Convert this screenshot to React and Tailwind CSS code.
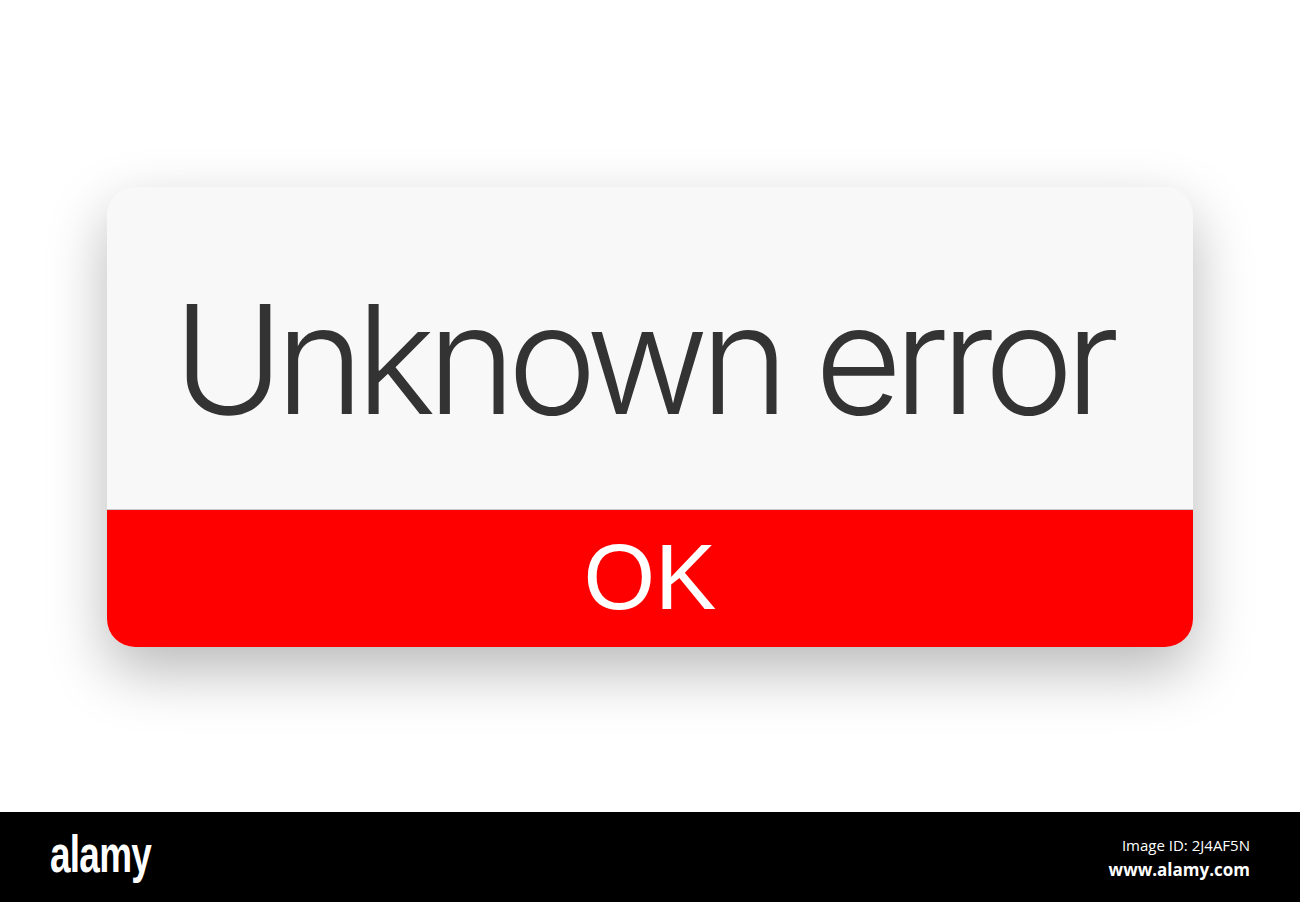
import React from 'react';

const ErrorDialog = () => {
  return (
    <div className="w-[1086px] rounded-[28px] overflow-hidden bg-[#f8f8f8] shadow-[0_24px_60px_rgba(0,0,0,0.28)]">
      <div className="h-[323px] flex items-center justify-center border-b border-[#c9c9c9] pt-[22px]">
        <span
          className="text-[#333333] text-[151px] leading-none font-light tracking-[-8.5px] pr-[16px]"
          style={{ fontFamily: 'Inter, "Liberation Sans", sans-serif' }}
        >
          Unknown error
        </span>
      </div>
      <button className="w-full h-[137px] bg-[#ff0000] flex items-center justify-center pb-[4px]">
        <span
          className="text-white text-[92px] leading-none"
          style={{ fontFamily: '"Liberation Sans", Arial, sans-serif' }}
        >
          OK
        </span>
      </button>
    </div>
  );
};

export default function App() {
  return (
    <div className="w-[1300px] h-[902px] flex flex-col bg-white overflow-hidden">
      <div className="h-[812px] flex items-start justify-center pt-[187px]">
        <ErrorDialog />
      </div>
      <footer className="h-[90px] bg-black flex items-center justify-between pl-[50px] pr-[50px]">
        <span
          className="inline-block origin-left scale-x-[0.71] text-white text-[52px] font-bold leading-none tracking-[-1px] pb-[6px]"
          style={{ fontFamily: '"Liberation Sans", sans-serif' }}
        >
          alamy
        </span>
        <div
          className="flex flex-col items-end text-white gap-[4px] pt-[2px]"
          style={{ fontFamily: '"Open Sans", "DejaVu Sans", sans-serif' }}
        >
          <span className="text-[15px] leading-tight">Image ID: 2J4AF5N</span>
          <span className="text-[17px] font-bold leading-tight">www.alamy.com</span>
        </div>
      </footer>
    </div>
  );
}
